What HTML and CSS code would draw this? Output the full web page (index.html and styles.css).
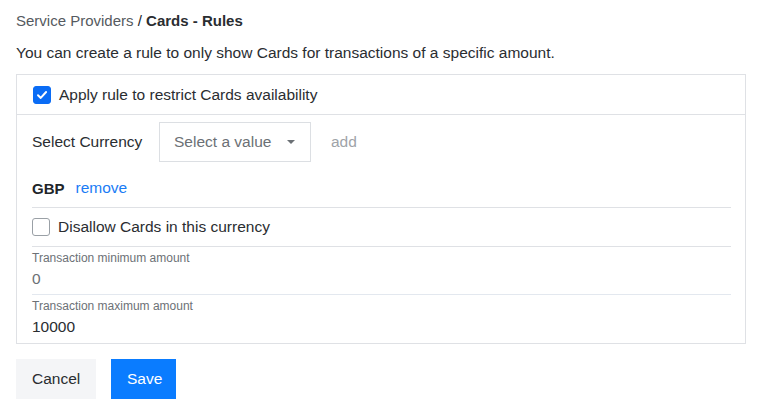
FILE: index.html
```html
<!DOCTYPE html>
<html>
<head>
<meta charset="utf-8">
<link rel="stylesheet" href="styles.css">
</head>
<body>
<div class="page">
  <div class="breadcrumb"><span class="crumb">Service Providers</span> / <strong>Cards - Rules</strong></div>
  <p class="intro">You can create a rule to only show Cards for transactions of a specific amount.</p>
  <div class="card">
    <label class="card-head check-row">
      <span class="box checked">
        <svg viewBox="0 0 18 18" width="18" height="18"><path d="M4.5 9.3 L7.6 12.3 L13.6 5.6" fill="none" stroke="#fff" stroke-width="2.2" stroke-linecap="round" stroke-linejoin="round"/></svg>
      </span>
      <span>Apply rule to restrict Cards availability</span>
    </label>
    <div class="card-body">
      <div class="currency-row">
        <span class="label">Select Currency</span>
        <div class="select"><span>Select a value</span><span class="caret"></span></div>
        <span class="add">add</span>
      </div>
      <div class="gbp-row"><strong>GBP</strong><a class="remove">remove</a></div>
      <label class="check-row disallow">
        <span class="box"></span>
        <span>Disallow Cards in this currency</span>
      </label>
      <div class="field">
        <div class="field-label">Transaction minimum amount</div>
        <div class="field-value muted">0</div>
      </div>
      <div class="field last">
        <div class="field-label">Transaction maximum amount</div>
        <div class="field-value">10000</div>
      </div>
    </div>
  </div>
  <div class="actions">
    <button class="btn cancel">Cancel</button>
    <button class="btn save">Save</button>
  </div>
</div>
</body>
</html>
```
FILE: styles.css
```css
html, body { margin: 0; padding: 0; background: #fff; }
body { font-family: "Liberation Sans", Arial, sans-serif; color: #212529; font-size: 15.5px; }
.page { padding: 10px 22px 0 16px; }
.breadcrumb { font-size: 15px; line-height: 22px; color: #212529; }
.crumb { color: #555a60; }
.breadcrumb strong { font-weight: 600; color: #2a2d31; }
.intro { margin: 10px 0 0; font-size: 15.5px; line-height: 22px; color: #2a2d31; }
.card { margin-top: 10px; border: 1px solid #dfe1e5; }
.card-head { height: 39px; border-bottom: 1px solid #dfe1e5; padding: 0 16px; }
.check-row { display: flex; align-items: center; gap: 8px; font-size: 15.5px; color: #2a2d31; }
.box { width: 16px; height: 16px; border: 1px solid #9aa0a6; border-radius: 3px; display: flex; align-items: center; justify-content: center; background: #fff; }
.box.checked { background: #0a6cf5; border-color: #0a6cf5; }
.box svg { display: block; }
.card-body { padding: 7px 14px 0 15px; }
.currency-row { display: flex; align-items: center; height: 39px; }
.label { font-size: 15.5px; color: #2a2d31; width: 127px; }
.select { box-sizing: border-box; width: 152px; height: 40px; border: 1px solid #dcdfe3; display: flex; align-items: center; justify-content: space-between; padding: 0 15px 0 14px; color: #6b7075; font-size: 15.5px; }
.caret { width: 0; height: 0; border-left: 4px solid transparent; border-right: 4px solid transparent; border-top: 4px solid #6b7075; }
.add { margin-left: 20px; color: #9ea3a8; font-size: 15.5px; }
.gbp-row { display: flex; align-items: center; gap: 11px; height: 26px; margin-top: 14px; padding-bottom: 6px; border-bottom: 1px solid #dfe1e5; font-size: 15px; }
.gbp-row strong { font-weight: 700; color: #212529; }
.remove { color: #1a7cf5; font-size: 15.5px; }
.disallow { height: 38px; border-bottom: 1px solid #dfe1e5; gap: 8px; }
.field { border-bottom: 1px solid #e3e8ef; padding: 4px 0 4px; }
.field.last { border-bottom: none; padding-bottom: 5px; }
.field-label { font-size: 12px; line-height: 14px; color: #6c7176; }
.field-value { font-size: 15.5px; line-height: 22px; margin-top: 3px; color: #2a2d31; }
.field-value.muted { color: #6b7075; }
.actions { display: flex; gap: 15px; margin-top: 15px; }
.btn { border: none; height: 40px; font-family: inherit; font-size: 15.5px; padding: 0 16px; }
.cancel { background: #f4f5f7; color: #2a2d31; width: 80px; }
.save { background: #0a7cff; color: #fff; width: 65px; }
```
